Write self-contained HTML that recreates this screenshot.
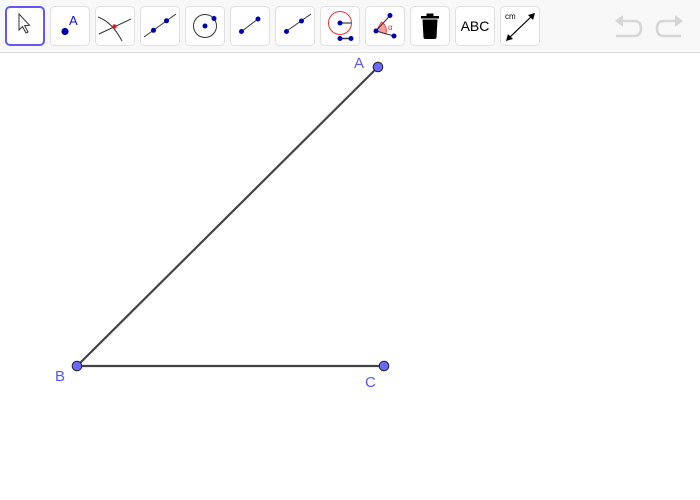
<!DOCTYPE html>
<html><head><meta charset="utf-8"><style>
html,body{margin:0;padding:0;background:#fff;width:700px;height:500px;overflow:hidden}
svg{display:block}
text{font-family:"Liberation Sans",sans-serif}
</style></head><body>
<svg width="700" height="500" viewBox="0 0 700 500" xmlns="http://www.w3.org/2000/svg">
<rect x="0" y="0" width="700" height="52" fill="#f8f8f8"/>
<line x1="0" y1="52.5" x2="700" y2="52.5" stroke="#dcdcdc"/>
<!-- buttons -->
<g fill="#fff" stroke="#e0e0e0">
<rect x="50.5" y="6.5" width="39" height="39" rx="4"/>
<rect x="95.5" y="6.5" width="39" height="39" rx="4"/>
<rect x="140.5" y="6.5" width="39" height="39" rx="4"/>
<rect x="185.5" y="6.5" width="39" height="39" rx="4"/>
<rect x="230.5" y="6.5" width="39" height="39" rx="4"/>
<rect x="275.5" y="6.5" width="39" height="39" rx="4"/>
<rect x="320.5" y="6.5" width="39" height="39" rx="4"/>
<rect x="365.5" y="6.5" width="39" height="39" rx="4"/>
<rect x="410.5" y="6.5" width="39" height="39" rx="4"/>
<rect x="455.5" y="6.5" width="39" height="39" rx="4"/>
<rect x="500.5" y="6.5" width="39" height="39" rx="4"/>
</g>
<rect x="6" y="7" width="38" height="38" rx="4" fill="#fff" stroke="#6557f5" stroke-width="2"/>
<!-- 1 arrow -->
<path d="M19 14 L19 30 L22.5 26.5 L26 33 L28 32 L24.7 25.7 L29.5 25.2 Z" fill="#fff" stroke="#333" stroke-width="1"/>
<!-- 2 point A -->
<circle cx="65" cy="31.5" r="3.6" fill="#0000b0"/>
<text x="69" y="25" font-size="13" fill="#1010e0">A</text>
<!-- 3 intersect -->
<path d="M98 17 Q112 22 122 41" fill="none" stroke="#333"/>
<path d="M99 34 L131 19" fill="none" stroke="#333"/>
<circle cx="114.5" cy="26.5" r="2.2" fill="#e02020"/>
<!-- 4 line -->
<line x1="144" y1="37" x2="176" y2="14" stroke="#333"/>
<circle cx="153.5" cy="30.3" r="2.5" fill="#0000b0"/><circle cx="166.5" cy="20.8" r="2.5" fill="#0000b0"/>
<!-- 5 circle -->
<circle cx="205" cy="26" r="11.5" fill="none" stroke="#333"/>
<circle cx="205" cy="26" r="2.5" fill="#0000b0"/><circle cx="214" cy="18.5" r="2.5" fill="#0000b0"/>
<!-- 6 segment -->
<line x1="241.5" y1="31.5" x2="258" y2="19" stroke="#333"/>
<circle cx="241.5" cy="31.5" r="2.5" fill="#0000b0"/><circle cx="258" cy="19" r="2.5" fill="#0000b0"/>
<!-- 7 ray -->
<line x1="286" y1="31.5" x2="311" y2="14" stroke="#333"/>
<circle cx="286.5" cy="31.5" r="2.5" fill="#0000b0"/><circle cx="301.5" cy="21" r="2.5" fill="#0000b0"/>
<!-- 8 compass -->
<circle cx="340" cy="23" r="11.5" fill="none" stroke="#f03030"/>
<line x1="340" y1="23" x2="351" y2="23" stroke="#888" stroke-width="2"/>
<circle cx="340" cy="23" r="2.5" fill="#0000b0"/>
<line x1="340" y1="38.5" x2="351" y2="38.5" stroke="#333" stroke-width="1.5"/>
<circle cx="340" cy="38.5" r="2.5" fill="#0000b0"/><circle cx="351" cy="38.5" r="2.5" fill="#0000b0"/>
<!-- 9 angle -->
<path d="M376 31 L381.5 22 A10 10 0 0 1 385.8 34 Z" fill="#f6a0a0" stroke="#f03030" stroke-width="0.8"/>
<line x1="376" y1="31" x2="390" y2="15.5" stroke="#333"/>
<line x1="376" y1="31" x2="394" y2="36" stroke="#333"/>
<circle cx="376" cy="31" r="2.5" fill="#0000b0"/><circle cx="390" cy="15.5" r="2.5" fill="#0000b0"/><circle cx="394" cy="36" r="2.5" fill="#0000b0"/>
<text x="388" y="30" font-size="8" fill="#e03030">α</text>
<!-- 10 trash -->
<rect x="421" y="16" width="18" height="2.5" fill="#000"/>
<rect x="426.5" y="13.5" width="7" height="3" fill="#000"/>
<path d="M422.5 19.5 H437.5 L436.5 37.5 Q436.3 39 434.5 39 H425.5 Q423.7 39 423.5 37.5 Z" fill="#000"/>
<!-- 11 ABC -->
<text x="475" y="31" font-size="14" fill="#000" text-anchor="middle">ABC</text>
<!-- 12 distance -->
<text x="505" y="19" font-size="8" fill="#000">cm</text>
<line x1="508" y1="39" x2="533" y2="15" stroke="#000" stroke-width="1.2"/>
<path d="M506 41 L508 34 L513 39 Z" fill="#000"/>
<path d="M535 13 L533 20 L528 15 Z" fill="#000"/>
<!-- undo redo -->
<g fill="none" stroke="#d6d6d6" stroke-width="2.5">
<path d="M621 21 H634 Q641 21 641 28.5 Q641 36 634 36 H616"/>
<path d="M677 21 H664 Q657 21 657 28.5 Q657 36 664 36 H681"/>
</g>
<path d="M615 21 L623 15 L623 27 Z" fill="#d6d6d6"/>
<path d="M683 21 L675 15 L675 27 Z" fill="#d6d6d6"/>
<!-- geometry -->
<g stroke="#444" stroke-width="2.2" stroke-linecap="round">
<line x1="77" y1="366" x2="378" y2="67"/>
<line x1="77" y1="366" x2="384" y2="366"/>
</g>
<g fill="#6a6aff" stroke="#222" stroke-width="1">
<circle cx="378" cy="67" r="4.8"/>
<circle cx="77" cy="366" r="4.8"/>
<circle cx="384" cy="366" r="4.8"/>
</g>
<g font-size="15" fill="#5555ff">
<text x="354" y="68">A</text>
<text x="55" y="381">B</text>
<text x="365" y="387">C</text>
</g>
</svg>
</body></html>
